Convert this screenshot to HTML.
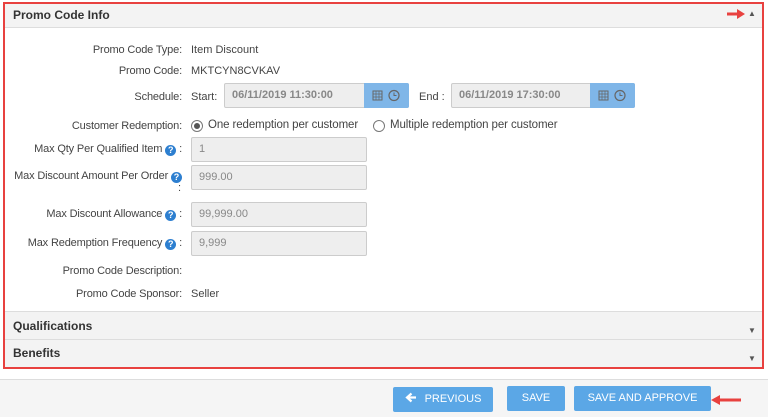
<!DOCTYPE html>
<html><head><style>
*{box-sizing:border-box;margin:0;padding:0}
body{width:768px;height:417px;background:#fff;font-family:"Liberation Sans",sans-serif;font-size:11px;color:#444;position:relative;overflow:hidden}
.a{position:absolute}
.box{left:3px;top:2px;width:761px;height:367px;border:2px solid #e8413f}
.hdr{background:#f3f3f3;border-bottom:1px solid #ddd;font-weight:bold;color:#333;font-size:12px;padding-left:8px}
.lbl{text-align:right;width:182px;left:0;letter-spacing:-0.15px}
.inp{background:#eee;border:1px solid #ccc;border-radius:2px;color:#888;padding-left:7px;line-height:23px;height:25px}
.addon{background:#7fb6e8;border-radius:0 2px 2px 0;top:-1px;height:25px;width:45px}
.q{display:inline-block;width:11px;height:11px;border-radius:50%;background:#2d7fd0;color:#fff;font-size:9px;line-height:11px;text-align:center;font-weight:bold;vertical-align:-1px;letter-spacing:0}
.rad{width:12px;height:12px;border:1px solid #777;border-radius:50%;background:#fff}
.btn{background:#5ba7e6;color:#fff;text-align:center;line-height:25px;height:25px;border-radius:2px;font-size:11px}
.tri{font-size:8px;color:#555}
</style></head><body>
<div class="a box"></div>
<div class="a hdr" style="left:5px;top:4px;width:757px;height:24px;line-height:22px">Promo Code Info</div>
<div class="a tri" style="left:748px;top:9px">▲</div>
<svg class="a" style="left:726px;top:8px" width="20" height="12"><path d="M1 6H13" stroke="#e8413f" stroke-width="3"/><path d="M11 1L19 6L11 11Z" fill="#e8413f"/></svg>

<div class="a lbl" style="top:44px">Promo Code Type:</div><div class="a" style="left:191px;top:44px">Item Discount</div>
<div class="a lbl" style="top:65px">Promo Code:</div><div class="a" style="left:191px;top:65px">MKTCYN8CVKAV</div>
<div class="a lbl" style="top:91px">Schedule:</div><div class="a" style="left:191px;top:91px">Start:</div>
<div class="a inp" style="left:224px;top:83px;width:185px;font-weight:bold">06/11/2019 11:30:00<div class="a addon" style="left:139px"><svg width="45" height="25"><rect x="9" y="8" width="9" height="9" fill="none" stroke="#666"/><path d="M9 11H18M12 8V17M15 8V17M9 14H18" stroke="#666" stroke-width=".7"/><circle cx="30" cy="12.5" r="5" fill="none" stroke="#666" stroke-width="1.2"/><path d="M30 9.5V12.5H32.5" stroke="#666" fill="none"/></svg></div></div>
<div class="a" style="left:419px;top:91px">End :</div>
<div class="a inp" style="left:451px;top:83px;width:184px;font-weight:bold">06/11/2019 17:30:00<div class="a addon" style="left:138px"><svg width="45" height="25"><rect x="9" y="8" width="9" height="9" fill="none" stroke="#666"/><path d="M9 11H18M12 8V17M15 8V17M9 14H18" stroke="#666" stroke-width=".7"/><circle cx="30" cy="12.5" r="5" fill="none" stroke="#666" stroke-width="1.2"/><path d="M30 9.5V12.5H32.5" stroke="#666" fill="none"/></svg></div></div>
<div class="a lbl" style="top:120px">Customer Redemption:</div>
<div class="a rad" style="left:191px;top:120px"><div style="width:6px;height:6px;border-radius:50%;background:#555;margin:2px"></div></div>
<div class="a" style="left:208px;top:119px;font-size:11.5px;letter-spacing:-0.1px">One redemption per customer</div>
<div class="a rad" style="left:373px;top:120px"></div>
<div class="a" style="left:390px;top:119px;font-size:11.5px;letter-spacing:-0.1px">Multiple redemption per customer</div>

<div class="a lbl" style="top:143px">Max Qty Per Qualified Item <span class="q">?</span> :</div>
<div class="a inp" style="left:191px;top:137px;width:176px">1</div>
<div class="a lbl" style="top:170px">Max Discount Amount Per Order <span class="q">?</span></div>
<div class="a" style="left:178px;top:182px">:</div>
<div class="a inp" style="left:191px;top:165px;width:176px">999.00</div>
<div class="a lbl" style="top:208px">Max Discount Allowance <span class="q">?</span> :</div>
<div class="a inp" style="left:191px;top:202px;width:176px">99,999.00</div>
<div class="a lbl" style="top:237px">Max Redemption Frequency <span class="q">?</span> :</div>
<div class="a inp" style="left:191px;top:231px;width:176px">9,999</div>
<div class="a lbl" style="top:265px">Promo Code Description:</div>
<div class="a lbl" style="top:288px">Promo Code Sponsor:</div><div class="a" style="left:191px;top:288px">Seller</div>

<div class="a hdr" style="left:5px;top:311px;width:757px;height:29px;line-height:28px;border-top:1px solid #ddd">Qualifications</div>
<div class="a tri" style="left:748px;top:326px">▼</div>
<div class="a hdr" style="left:5px;top:340px;width:757px;height:27px;line-height:27px;border-bottom:none">Benefits</div>
<div class="a tri" style="left:748px;top:354px">▼</div>

<div class="a" style="left:0;top:379px;width:768px;height:38px;background:#f5f5f5;border-top:1px solid #ddd"></div>
<div class="a btn" style="left:393px;top:387px;width:100px"><svg width="12" height="11" style="vertical-align:-1px;margin-right:8px"><path d="M11 5.5H3M6.5 1.5L2 5.5L6.5 9.5" stroke="#fff" stroke-width="2.2" fill="none"/></svg>PREVIOUS</div>
<div class="a btn" style="left:507px;top:386px;width:58px">SAVE</div>
<div class="a btn" style="left:574px;top:386px;width:137px">SAVE AND APPROVE</div>
<svg class="a" style="left:710px;top:394px" width="32" height="12"><path d="M8 6H31" stroke="#e8413f" stroke-width="3"/><path d="M10 1L1 6L10 11Z" fill="#e8413f"/></svg>
</body></html>
